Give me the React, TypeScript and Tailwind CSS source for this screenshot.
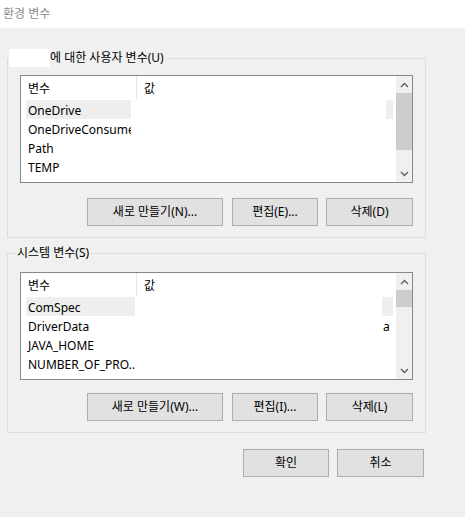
import React from "react";

const FONT = { fontFamily: '"Noto Sans", "Noto Sans CJK KR", sans-serif' };

function Chevron({ up }: { up?: boolean }) {
  return (
    <svg width="9" height="6" viewBox="0 0 9 6" className="block">
      <path
        d={up ? "M1 5 L4.5 1.5 L8 5" : "M1 1 L4.5 4.5 L8 1"}
        fill="none"
        stroke="#606060"
        strokeWidth="1.4"
      />
    </svg>
  );
}

function ScrollBar({ thumbH }: { thumbH: number }) {
  return (
    <div className="w-[16px] h-full bg-[#f0f0f0] flex flex-col items-center">
      <div className="h-[17px] w-full flex items-center justify-center">
        <Chevron up />
      </div>
      <div className="w-full bg-[#cdcdcd]" style={{ height: thumbH }} />
      <div className="flex-1" />
      <div className="h-[17px] w-full flex items-center justify-center">
        <Chevron />
      </div>
    </div>
  );
}

function ListView({
  rows,
  hlW,
  sideHl,
  thumbH,
  extra,
}: {
  rows: string[];
  hlW: number;
  sideHl: { left: number; w: number };
  thumbH: number;
  extra?: React.ReactNode;
}) {
  return (
    <div className="w-[393px] h-[108px] border border-[#828790] bg-white flex">
      <div className="flex-1 relative overflow-hidden">
        <div className="h-[24px] flex text-[12px] text-black">
          <div className="w-[116px] h-[23px] border-r border-[#e5e5e5] pl-[7px] pt-[2px] flex items-center">
            변수
          </div>
          <div className="pl-[7px] pt-[2px] flex items-center h-[23px]">값</div>
        </div>
        {rows.map((r, i) => (
          <div key={r} className="h-[19px] flex items-center text-[12px] text-black relative">
            <div
              className={"h-[19px] ml-[5px] pl-[2px] pt-[2px] flex items-center whitespace-nowrap overflow-hidden " + (i === 0 ? "bg-[#eeeeee]" : "")}
              style={{ width: hlW }}
            >
              {r}
            </div>
            {i === 0 && (
              <div
                className="absolute top-0 h-[19px] bg-[#eeeeee]"
                style={{ left: sideHl.left, width: sideHl.w }}
              />
            )}
            {i === 1 && extra}
          </div>
        ))}
      </div>
      <ScrollBar thumbH={thumbH} />
    </div>
  );
}

function Btn({ w, children, className = "" }: { w: number; children: React.ReactNode; className?: string }) {
  return (
    <div
      className={"h-[28px] bg-[#e1e1e1] border border-[#adadad] flex items-center justify-center text-[12px] text-black " + className}
      style={{ width: w }}
    >
      {children}
    </div>
  );
}

export default function App() {
  return (
    <div className="w-[465px] h-[517px] bg-[#f0f0f0] overflow-hidden" style={FONT}>
      <div className="h-[28px] bg-white flex items-center pl-[3px] text-[12px] text-[#8c8c8c]">
        환경 변수
      </div>

      <fieldset className="ml-[7px] mt-[21px] w-[417px] border border-[#dcdcdc] px-[12px] pt-[8px] pb-[11px]">
        <legend className="ml-[-11px] text-[12px] leading-[18px] text-black flex items-center pr-[2px]">
          <span className="inline-block w-[41px] h-[18px] bg-white" />
          <span>에 대한 사용자 변수(U)</span>
        </legend>
        <ListView
          rows={["OneDrive", "OneDriveConsumer", "Path", "TEMP"]}
          hlW={105}
          sideHl={{ left: 365, w: 7 }}
          thumbH={57}
        />
        <div className="flex mt-[15px]">
          <Btn w={136} className="ml-[67px]">새로 만들기(N)...</Btn>
          <Btn w={86} className="ml-[9px]">편집(E)...</Btn>
          <Btn w={87} className="ml-[8px]">삭제(D)</Btn>
        </div>
      </fieldset>

      <fieldset className="ml-[7px] mt-[6px] w-[417px] border border-[#dcdcdc] px-[12px] pt-[10px] pb-[11px]">
        <legend className="ml-[-5px] px-[2px] text-[12px] leading-[18px] text-black">
          시스템 변수(S)
        </legend>
        <ListView
          rows={["ComSpec", "DriverData", "JAVA_HOME", "NUMBER_OF_PRO..."]}
          hlW={109}
          sideHl={{ left: 361, w: 11 }}
          thumbH={17}
          extra={<span className="absolute left-[362px] top-0 pt-[2px] h-[19px] flex items-center">a</span>}
        />
        <div className="flex mt-[13px]">
          <Btn w={136} className="ml-[67px]">새로 만들기(W)...</Btn>
          <Btn w={86} className="ml-[9px]">편집(I)...</Btn>
          <Btn w={87} className="ml-[8px]">삭제(L)</Btn>
        </div>
      </fieldset>

      <div className="flex mt-[16px]">
        <Btn w={86} className="ml-[243px]">확인</Btn>
        <Btn w={87} className="ml-[8px]">취소</Btn>
      </div>
    </div>
  );
}
